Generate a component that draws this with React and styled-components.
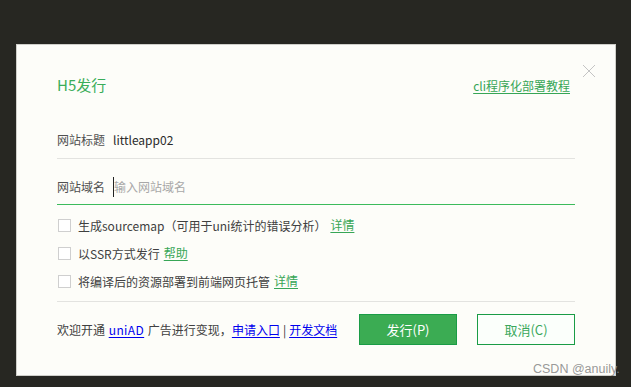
import React from "react";
import styled, { createGlobalStyle } from "styled-components";

const GlobalStyle = createGlobalStyle`
  html, body {
    margin: 0;
    padding: 0;
    width: 631px;
    height: 387px;
    overflow: hidden;
    background: #272722;
    font-family: "Noto Sans CJK SC", "Noto Sans", sans-serif;
  }
`;

const Screen = styled.div`
  position: relative;
  width: 631px;
  height: 387px;
  padding: 44px 0 0 16px;
  box-sizing: border-box;
`;

const Dialog = styled.div`
  position: relative;
  width: 600px;
  height: 332px;
  box-sizing: border-box;
  border: 1px solid #cfcfca;
  background: #fdfdf9;
  padding: 0 40px;
  display: flex;
  flex-direction: column;
`;

const CloseButton = styled.button`
  position: absolute;
  top: 18px;
  right: 19px;
  width: 15px;
  height: 15px;
  padding: 0;
  border: none;
  background: none;
  display: flex;
  align-items: center;
  justify-content: center;
  cursor: pointer;
`;

const Header = styled.div`
  display: flex;
  justify-content: space-between;
  align-items: baseline;
  padding-top: 30px;
  height: 20px;
  margin-bottom: 27px;
`;

const Title = styled.div`
  font-size: 15px;
  line-height: 20px;
  color: #3aad5a;
`;

const GreenLink = styled.a`
  font-size: 12px;
  line-height: 20px;
  color: #37a656;
  text-decoration: underline;
  text-underline-offset: 2px;
  cursor: pointer;
  margin-left: ${p => (p.$gap ? "4px" : "0")};
  margin-right: ${p => (p.$end ? "5px" : "0")};
`;

const FieldRow = styled.div`
  display: flex;
  align-items: center;
  height: ${p => (p.$focused ? "20px" : "36px")};
  padding: ${p => (p.$focused ? "18px 0 7px" : "0")};
  border-bottom: 1px solid ${p => (p.$focused ? "#3cbb5c" : "#e3e3e0")};
`;

const FieldLabel = styled.span`
  width: 56px;
  font-size: 12px;
  line-height: 20px;
  color: #505050;
`;

const FieldValue = styled.span`
  font-size: 12px;
  line-height: 20px;
  color: #2a2a2a;
`;

const FieldInput = styled.input`
  flex: 1;
  border: none;
  outline: none;
  background: transparent;
  padding: 0;
  font-family: inherit;
  font-size: 12px;
  line-height: 20px;
  color: #333;
  border-left: 1px solid #222;
  &::placeholder {
    color: #a8a8a8;
  }
`;

const Options = styled.div`
  display: flex;
  flex-direction: column;
  padding: 6px 0 6px;
  border-bottom: 1px solid #e3e3e0;
`;

const OptionRow = styled.label`
  display: flex;
  align-items: center;
  height: 28px;
  font-size: 12px;
  color: #404040;
`;

const Box = styled.span`
  width: 11px;
  height: 11px;
  border: 1px solid #cfcfcf;
  background: #fff;
  margin: 0 7px 0 1px;
  flex-shrink: 0;
`;

const Footer = styled.div`
  display: flex;
  justify-content: space-between;
  align-items: center;
  padding-top: 12px;
`;

const Promo = styled.div`
  font-size: 12px;
  color: #404040;
  white-space: nowrap;
`;

const BlueLink = styled.a`
  color: #0000ee;
  text-decoration: underline;
  text-underline-offset: 2px;
  letter-spacing: ${p => (p.$latin ? "0.4px" : "0")};
  margin: ${p => (p.$latin ? "0 1px" : "0")};
  cursor: pointer;
`;

const Separator = styled.span`
  margin: 0 3px;
  color: #333;
`;

const Buttons = styled.div`
  display: flex;
  gap: 20px;
`;

const Button = styled.button`
  width: 98px;
  height: 31px;
  box-sizing: border-box;
  border: 1px solid #1a9c46;
  background: ${p => (p.$primary ? "#3bac53" : "#fbfffb")};
  color: ${p => (p.$primary ? "#fff" : "#3aa85c")};
  font-family: inherit;
  font-size: 13px;
  cursor: pointer;
`;

const Watermark = styled.div`
  position: absolute;
  left: 533px;
  top: 362px;
  font-family: "Liberation Sans", Arial, sans-serif;
  font-size: 12.5px;
  color: rgba(140, 140, 140, 0.9);
  white-space: nowrap;
`;

const options = [
  { text: "生成sourcemap（可用于uni统计的错误分析）", link: "详情" },
  { text: "以SSR方式发行", link: "帮助" },
  { text: "将编译后的资源部署到前端网页托管", link: "详情" },
];

export default function App() {
  return (
    <>
      <GlobalStyle />
      <Screen>
        <Dialog>
          <CloseButton aria-label="close">
            <svg width="14" height="14" viewBox="0 0 14 14">
              <path d="M1 1 L13 13 M13 1 L1 13" stroke="#c4c4c4" strokeWidth="1" fill="none" />
            </svg>
          </CloseButton>
          <Header>
            <Title>H5发行</Title>
            <GreenLink $end>cli程序化部署教程</GreenLink>
          </Header>
          <FieldRow>
            <FieldLabel>网站标题</FieldLabel>
            <FieldValue>littleapp02</FieldValue>
          </FieldRow>
          <FieldRow $focused>
            <FieldLabel>网站域名</FieldLabel>
            <FieldInput placeholder="输入网站域名" />
          </FieldRow>
          <Options>
            {options.map((o, i) => (
              <OptionRow key={i}>
                <Box />
                {o.text}
                <GreenLink $gap>{o.link}</GreenLink>
              </OptionRow>
            ))}
          </Options>
          <Footer>
            <Promo>
              欢迎开通 <BlueLink $latin>uniAD</BlueLink> 广告进行变现，<BlueLink>申请入口</BlueLink>
              <Separator>|</Separator>
              <BlueLink>开发文档</BlueLink>
            </Promo>
            <Buttons>
              <Button $primary>发行(P)</Button>
              <Button>取消(C)</Button>
            </Buttons>
          </Footer>
        </Dialog>
        <Watermark>CSDN @anuily.</Watermark>
      </Screen>
    </>
  );
}
